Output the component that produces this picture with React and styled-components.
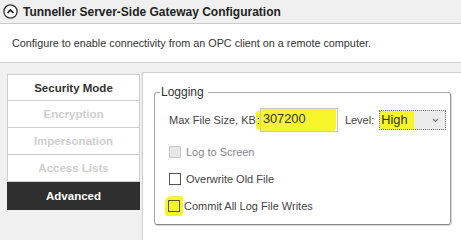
import styled, { createGlobalStyle } from 'styled-components';

const Global = createGlobalStyle`
  body {
    margin: 0;
    font-family: "Liberation Sans", Arial, sans-serif;
    font-size: 11px;
    color: #333;
  }
`;

const Page = styled.div`
  width: 461px;
  height: 240px;
  display: flex;
  flex-direction: column;
  background: #f0f0f0;
  overflow: hidden;
`;

const Header = styled.div`
  height: 24px;
  display: flex;
  align-items: center;
  gap: 5px;
  padding-left: 3px;
  background: #f0f0f0;
  border-bottom: 1px solid #c8c8c8;
  box-sizing: border-box;
`;

const Title = styled.span`
  font-weight: bold;
  font-size: 12px;
  color: #222;
`;

const Description = styled.div`
  height: 39px;
  display: flex;
  align-items: center;
  padding-left: 12px;
  background: #fff;
  border-bottom: 1px solid #cfcfcf;
  box-sizing: border-box;
  color: #333;
  font-size: 10.8px;
`;

const Body = styled.div`
  flex: 1;
  display: flex;
  padding-top: 9px;
`;

const Tabs = styled.div`
  width: 133px;
  margin: 2px 2px 0 7px;
  display: flex;
  flex-direction: column;
`;

const Tab = styled.div`
  box-sizing: border-box;
  display: flex;
  align-items: center;
  justify-content: center;
  font-weight: bold;
  font-size: 11.5px;
  border: 1px solid #cfcfcf;
  border-top: ${p => (p.$first ? '1px solid #cfcfcf' : 'none')};
  background: ${p => (p.$active ? '#2f2f2f' : '#fff')};
  color: ${p => (p.$active ? '#fff' : p.$disabled ? '#cfcfcf' : '#333')};
  border-color: ${p => (p.$active ? '#2f2f2f' : '#cfcfcf')};
  height: ${p => (p.$active ? '28px' : '27px')};
`;

const Panel = styled.div`
  flex: 1;
  background: #fff;
  border-top: 1px solid #cfcfcf;
  border-left: 1px solid #cfcfcf;
  padding: 12px 0 0 11px;
`;

const Group = styled.fieldset`
  width: 297px;
  height: 140px;
  box-sizing: border-box;
  margin: 0;
  padding: 8px 0 0 14px;
  border: 1px solid #a8a8a8;
  border-right-color: #999;
  border-bottom-color: #888;
  border-radius: 3px;
  box-shadow: 1px 1px 0 #d8d8d8;
  display: flex;
  flex-direction: column;
`;

const Legend = styled.legend`
  font-size: 12px;
  color: #333;
  padding: 0 4px 0 1px;
  margin-left: -9px;
`;

const Row = styled.div`
  display: flex;
  align-items: center;
  height: 26px;
  margin-bottom: 5px;
  white-space: nowrap;
`;

const Mark = styled.span`
  background: #f5f52a;
  border-radius: 3px 0 0 3px;
  padding: 3px 0 4px 1px;
`;

const Field = styled.div`
  width: 78px;
  height: 24px;
  box-sizing: border-box;
  border: 1px solid #c8c8c8;
  display: flex;
  align-items: flex-start;
`;

const FieldText = styled.span`
  background: #f5f52a;
  height: 22px;
  line-height: 20px;
  padding: 0 30px 0 2px;
  font-size: 12.8px;
  color: #333;
  border-radius: 0 0 4px 0;
`;

const Label = styled.span`
  color: #444;
  margin-left: ${p => p.$gap || 0}px;
`;

const Select = styled.div`
  width: 67px;
  height: 20px;
  box-sizing: border-box;
  margin-left: 5px;
  border: 1px dotted #777;
  background: #ececec;
  display: flex;
  align-items: center;
  justify-content: space-between;
  padding-right: 6px;
`;

const SelectText = styled.span`
  background: #f5f52a;
  height: 18px;
  line-height: 18px;
  padding: 0 6px 0 1px;
  font-size: 12.8px;
  color: #333;
`;

const Check = styled.span`
  width: 12px;
  height: 12px;
  box-sizing: border-box;
  flex-shrink: 0;
  border: 1px solid ${p => (p.$disabled ? '#c8c8c8' : '#555')};
  background: ${p => (p.$disabled ? '#e6e6e6' : p.$mark ? 'transparent' : '#fff')};
  margin-right: ${p => (p.$mark ? 0 : 5)}px;
`;

const CheckMark = styled.span`
  display: flex;
  align-items: center;
  justify-content: center;
  width: 18px;
  height: 20px;
  margin-left: -4px;
  margin-right: 1px;
  background: #f5f52a;
  border-radius: 6px 2px 3px 2px;
`;

const CheckRow = styled.div`
  display: flex;
  align-items: center;
  height: 27px;
  color: ${p => (p.$disabled ? '#888' : '#444')};
`;

function CollapseIcon() {
  return (
    <svg width="15" height="15" viewBox="0 0 15 15">
      <circle cx="7.5" cy="7.5" r="6.6" fill="#fff" stroke="#333" strokeWidth="1.3" />
      <path d="M4.6 8.9 L7.5 6 L10.4 8.9" fill="none" stroke="#222" strokeWidth="1.7" />
    </svg>
  );
}

export default function App() {
  return (
    <Page>
      <Global />
      <Header>
        <CollapseIcon />
        <Title>Tunneller Server-Side Gateway Configuration</Title>
      </Header>
      <Description>
        Configure to enable connectivity from an OPC client on a remote computer.
      </Description>
      <Body>
        <Tabs>
          <Tab $first>Security Mode</Tab>
          <Tab $disabled>Encryption</Tab>
          <Tab $disabled>Impersonation</Tab>
          <Tab $disabled>Access Lists</Tab>
          <Tab $active>Advanced</Tab>
        </Tabs>
        <Panel>
          <Group>
            <Legend>Logging</Legend>
            <Row>
              <Label>Max File Size, KB</Label>
              <Mark>:</Mark>
              <Field>
                <FieldText>307200</FieldText>
              </Field>
              <Label $gap={7}>Level:</Label>
              <Select>
                <SelectText>High</SelectText>
                <svg width="7" height="5" viewBox="0 0 7 5">
                  <path d="M1 1 L3.5 3.5 L6 1" fill="none" stroke="#777" strokeWidth="1.2" />
                </svg>
              </Select>
            </Row>
            <CheckRow $disabled>
              <Check $disabled />
              Log to Screen
            </CheckRow>
            <CheckRow>
              <Check />
              Overwrite Old File
            </CheckRow>
            <CheckRow>
              <CheckMark>
                <Check $mark />
              </CheckMark>
              Commit All Log File Writes
            </CheckRow>
          </Group>
        </Panel>
      </Body>
    </Page>
  );
}
